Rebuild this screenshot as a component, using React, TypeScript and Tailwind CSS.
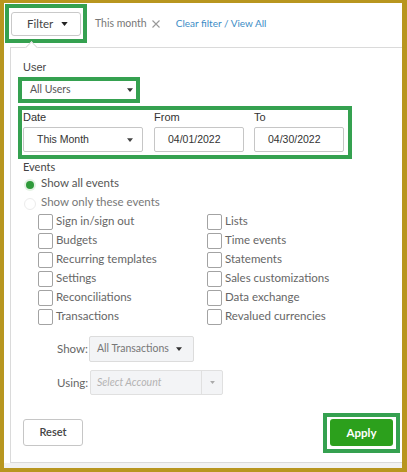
import React from "react";

const lato = "font-['Lato',sans-serif]";
const arial = "font-['Liberation_Sans',Arial,sans-serif]";

const leftEvents = ["Sign in/sign out", "Budgets", "Recurring templates", "Settings", "Reconciliations", "Transactions"];
const rightEvents = ["Lists", "Time events", "Statements", "Sales customizations", "Data exchange", "Revalued currencies"];

function Caret({ className = "" }: { className?: string }) {
  return (
    <svg viewBox="0 0 8 5" className={className}>
      <path d="M0 0h8L4 5z" fill="currentColor" />
    </svg>
  );
}

function Check({ label }: { label: string }) {
  return (
    <div className="flex h-[19px] items-start">
      <span className="w-[15px] h-[16px] shrink-0 rounded-[2px] border border-[#a3a3a3] bg-white" />
      <span className="ml-[3px] text-[11.5px] leading-[14px] text-[#666]">{label}</span>
    </div>
  );
}

function Field({ label, width, children }: { label: string; width: string; children: React.ReactNode }) {
  return (
    <div className={`${width} flex flex-col`}>
      <span className="text-[11px] leading-[14px] text-[#333]">{label}</span>
      <div className="mt-[3px] h-[25px] rounded-[2px] border border-[#c6c6c6] flex items-center justify-between pl-[13px] pr-[9px] text-[10.5px] text-[#333]">
        {children}
      </div>
    </div>
  );
}

export default function App() {
  return (
    <div className="w-[407px] h-[472px] bg-[#b8961f] pt-[3px] pl-[4px] pr-[5px] pb-[4px]">
      <div className={`h-full bg-white flex flex-col ${lato}`}>
        {/* Top bar */}
        <div className="h-[44px] shrink-0 flex items-start">
          <div className="ml-[1px] mt-[1px] w-[82px] h-[39px] border-4 border-[#35a150] pl-[2px] pt-[4px]">
            <div className="w-[70px] h-[24px] rounded-[3px] border border-[#c9c9c9] flex items-center pl-[15px] text-[11.5px] text-[#444]">
              Filter
              <Caret className="ml-[8px] w-[7px] h-[4px] text-[#222]" />
            </div>
          </div>
          <div className="ml-[8px] mt-[1px] h-[39px] flex items-center text-[10.5px] text-[#777]">
            <span>This month</span>
            <svg viewBox="0 0 8 8" className="ml-[5px] w-[8px] h-[8px]">
              <path d="M0.5 0.5l7 7M7.5 0.5l-7 7" stroke="#999" strokeWidth="1.1" fill="none" />
            </svg>
            <span className="ml-[16px] text-[10px] text-[#3b8cc6]">Clear filter / View All</span>
          </div>
        </div>

        {/* Filter panel */}
        <div className="relative flex-1 ml-[6px] border-l border-t border-b border-[#dadada] flex flex-col">
          <span className="absolute -top-[5px] left-[16px] w-[9px] h-[9px] rotate-45 bg-white border-l border-t border-[#dadada]" />

          <p className={`relative ml-[12px] mt-[12px] text-[11px] leading-[14px] text-[#444] ${arial}`}>User</p>
          <div className="ml-[7px] mt-[3px] w-[122px] h-[26px] border-4 border-[#35a150] flex items-center justify-between pl-[8px] pr-[3px] text-[10.5px] text-[#555]">
            <span>All Users</span>
            <Caret className="w-[6px] h-[4px] text-[#333]" />
          </div>

          <div className={`ml-[7px] mt-[3px] w-[334px] h-[53px] border-4 border-[#35a150] pl-[1px] flex ${arial}`}>
            <Field label="Date" width="w-[120px]">
              <span>This Month</span>
              <Caret className="w-[6px] h-[4px] text-[#444]" />
            </Field>
            <div className="ml-[11px]">
              <Field label="From" width="w-[90px]">
                <span>04/01/2022</span>
              </Field>
            </div>
            <div className="ml-[10px]">
              <Field label="To" width="w-[90px]">
                <span>04/30/2022</span>
              </Field>
            </div>
          </div>

          <p className="ml-[12px] mt-[1px] text-[11px] leading-[14px] text-[#444]">Events</p>
          <div className="ml-[13px] mt-[2px] flex flex-col">
            <div className="flex h-[19px] items-start">
              <span className="mt-[3px] w-[12px] h-[12px] rounded-full bg-[#e4f2e4] flex items-center justify-center">
                <span className="w-[8px] h-[8px] rounded-full bg-[#2f9a3b]" />
              </span>
              <span className="ml-[5px] text-[11.5px] leading-[14px] text-[#555]">Show all events</span>
            </div>
            <div className="flex h-[19px] items-start">
              <span className="mt-[3px] w-[12px] h-[12px] rounded-full border border-[#ececec] bg-white" />
              <span className="ml-[5px] text-[11.5px] leading-[14px] text-[#777]">Show only these events</span>
            </div>
          </div>

          <div className="ml-[27px] flex">
            <div className="w-[169px] flex flex-col">
              {leftEvents.map(e => <Check key={e} label={e} />)}
            </div>
            <div className="flex flex-col">
              {rightEvents.map(e => <Check key={e} label={e} />)}
            </div>
          </div>

          <div className="ml-[46px] mt-[8px] flex items-center">
            <span className="w-[32px] text-[11.5px] text-[#666]">Show:</span>
            <div className="w-[105px] h-[26px] rounded-[2px] border border-[#dcdcdc] bg-[#f3f4f6] flex items-center justify-between pl-[7px] pr-[11px] text-[10.5px] text-[#777]">
              <span>All Transactions</span>
              <Caret className="w-[6px] h-[4px] text-[#333]" />
            </div>
          </div>

          <div className="ml-[46px] mt-[8px] flex items-center">
            <span className="w-[33px] text-[11.5px] text-[#666]">Using:</span>
            <div className="w-[133px] h-[25px] rounded-[2px] border border-[#e0e0e0] bg-[#f3f4f6] flex">
              <span className="flex-1 flex items-center pl-[6px] italic text-[10.5px] text-[#b3b3b3]">Select Account</span>
              <span className="w-[21px] border-l border-[#e0e0e0] flex items-center justify-center">
                <Caret className="w-[5px] h-[3px] text-[#aaa]" />
              </span>
            </div>
          </div>

          <div className="mt-[18px] flex items-start justify-between">
            <button className="ml-[12px] mt-[6px] w-[60px] h-[27px] rounded-[3px] border border-[#c6c6c6] bg-white text-[11px] font-semibold text-[#444]">
              Reset
            </button>
            <div className="mr-[2px] w-[77px] h-[40px] border-4 border-[#35a150] pl-[3px] pt-[2px]">
              <button className="w-[63px] h-[27px] rounded-[3px] bg-[#2ca01c] text-[11.5px] font-bold text-white">
                Apply
              </button>
            </div>
          </div>
        </div>
        <div className="h-[5px] shrink-0 bg-[#f2f2f2]" />
      </div>
    </div>
  );
}
